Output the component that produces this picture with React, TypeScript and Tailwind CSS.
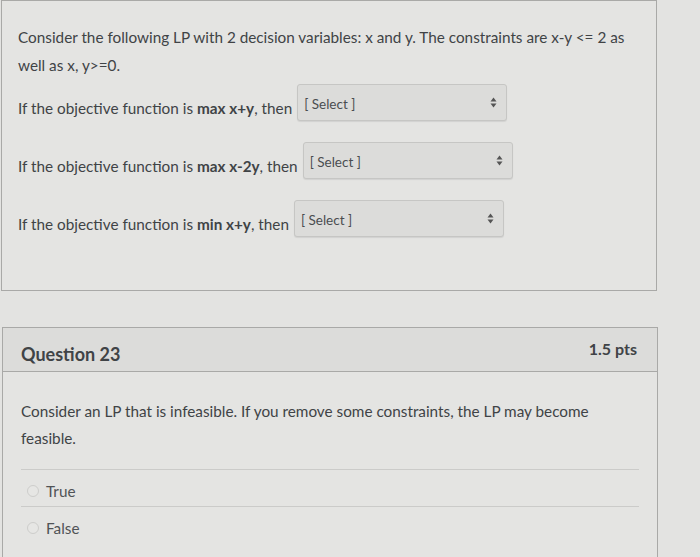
import React from "react";

function Chevrons() {
  return (
    <svg width="7" height="11" viewBox="0 0 7 11" className="text-[#555]">
      <path d="M3.5 0.5 L6.5 4.5 H0.5 Z" fill="currentColor" />
      <path d="M3.5 10.5 L6.5 6.5 H0.5 Z" fill="currentColor" />
    </svg>
  );
}

function SelectBox() {
  return (
    <div className="ml-[5px] flex h-[37px] w-[210px] items-start justify-between rounded-[3px] border border-[#c6c6c4] bg-[#dcdcda] pl-[6px] pr-[9px] shadow-[0_1px_1px_rgba(0,0,0,0.08)]">
      <span className="mt-[9px] text-[13.5px] text-[#4a4d50]">[ Select ]</span>
      <span className="mt-[12px]">
        <Chevrons />
      </span>
    </div>
  );
}

function Row({ pre, bold }: { pre: string; bold: string }) {
  return (
    <div className="flex items-end">
      <span className="mb-[4px] leading-[18px]">
        {pre}
        <b className="font-bold">{bold}</b>, then
      </span>
      <SelectBox />
    </div>
  );
}

function Radio({ label }: { label: string }) {
  return (
    <div className="flex h-[36px] items-start gap-[7px] pl-[6px] pt-[12px]">
      <span className="mt-[3px] h-[12px] w-[12px] rounded-full border border-[#cdcdcb] bg-[#e6e6e4]" />
      <span className="leading-[18px] text-[#505356]">{label}</span>
    </div>
  );
}

export default function App() {
  return (
    <div
      className="h-[557px] w-[700px] overflow-hidden bg-[#e3e3e1] text-[15.3px] text-[#404346]"
      style={{ fontFamily: "Lato, 'Open Sans', sans-serif" }}
    >
      {/* previous question body */}
      <div className="ml-[1px] h-[291px] w-[656px] border border-[#a9a9a7] bg-[#e4e4e2] pl-[16px] pt-[22px]">
        <p className="leading-[28px]">
          Consider the following LP with 2 decision variables: x and y. The constraints are x-y &lt;= 2 as
          <br />
          well as x, y&gt;=0.
        </p>
        <div className="mt-[5px] flex flex-col gap-[21px]">
          <Row pre="If the objective function is " bold="max x+y" />
          <Row pre="If the objective function is " bold="max x-2y" />
          <Row pre="If the objective function is " bold="min x+y" />
        </div>
      </div>

      {/* question 23 */}
      <div className="mt-[36px] ml-[2px] w-[656px] border border-b-0 border-[#a9a9a7] bg-[#e4e4e2]">
        <div className="flex h-[44px] items-start justify-between border-b border-[#a9a9a7] bg-[#dcdcda] pl-[18px] pr-[20px]">
          <h2 className="mt-[13px] text-[18px] leading-[26px] font-bold text-[#404346]">Question 23</h2>
          <span className="mt-[10px] text-[16px] leading-[22px] font-bold text-[#404346]">1.5 pts</span>
        </div>
        <div className="px-[18px] pt-[26px] pb-[20px]">
          <p className="leading-[27px]">
            Consider an LP that is infeasible. If you remove some constraints, the LP may become
            <br />
            feasible.
          </p>
          <div className="mt-[17px] border-t border-[#cbcbc9]">
            <Radio label="True" />
            <div className="border-t border-[#cbcbc9]" />
            <Radio label="False" />
          </div>
        </div>
      </div>
    </div>
  );
}
